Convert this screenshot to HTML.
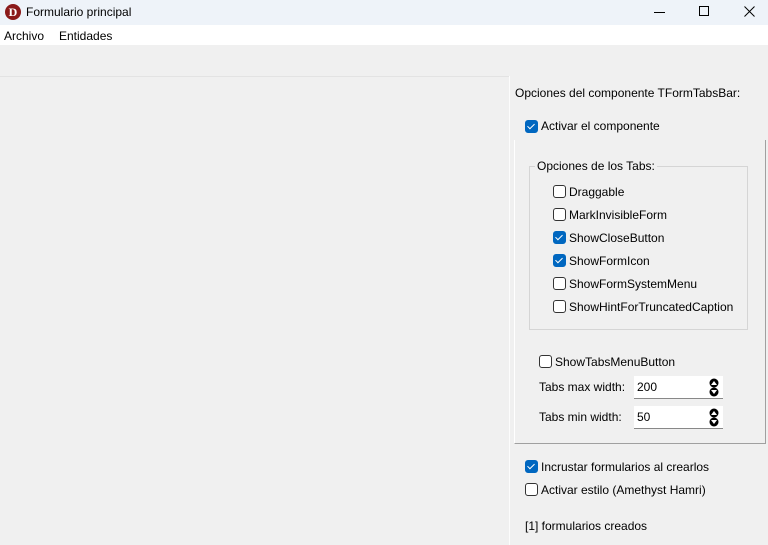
<!DOCTYPE html>
<html><head><style>
*{margin:0;padding:0;box-sizing:border-box}
body{width:768px;height:545px;background:#f0f0f0;font-family:"Liberation Sans",sans-serif;font-size:12px;color:#000;position:relative;overflow:hidden}
.a{position:absolute;white-space:nowrap}
.cb{position:absolute;width:13px;height:13px;border:1px solid #333;border-radius:3px;background:#fff}
.cb.on{background:#0067c0;border-color:#0067c0}
.cb.on::after{content:"";position:absolute;left:3px;top:1px;width:3px;height:6px;border:solid #fff;border-width:0 1.3px 1.3px 0;transform:rotate(45deg)}
.spin{position:absolute;width:89px;height:23px;background:#fff;border-bottom:1px solid #888}
.spin span{position:absolute;left:3px;top:4px}
.spin svg{position:absolute;right:3px;top:2px}
</style></head><body>
<div class="a" style="left:0;top:0;width:768px;height:25px;background:#eef3f9"></div>
<div class="a" style="left:5px;top:4px;width:16px;height:16px;border-radius:50%;background:#8b1a1a;color:#fff;font-weight:bold;font-size:12px;text-align:center;line-height:16px;font-family:'Liberation Serif',serif">D</div>
<div class="a" style="left:26px;top:5px">Formulario principal</div>
<div class="a" style="left:654px;top:12px;width:11px;height:1px;background:#000"></div>
<div class="a" style="left:699px;top:6px;width:10px;height:10px;border:1px solid #000"></div>
<svg class="a" style="left:744px;top:6px" width="11" height="11"><path d="M0.5 0.5L10.5 10.5M10.5 0.5L0.5 10.5" stroke="#000" stroke-width="1"/></svg>
<div class="a" style="left:0;top:25px;width:768px;height:20px;background:#fff"></div>
<div class="a" style="left:4px;top:29px">Archivo</div>
<div class="a" style="left:59px;top:29px">Entidades</div>
<div class="a" style="left:0;top:76px;width:509px;height:1px;background:#e3e3e3"></div>
<div class="a" style="left:509px;top:76px;width:1px;height:469px;background:#fcfcfc"></div>
<div class="a" style="left:515px;top:86px">Opciones del componente TFormTabsBar:</div>
<div class="cb on" style="left:525px;top:120px"></div><div class="a" style="left:541px;top:119px">Activar el componente</div>
<div class="a" style="left:514px;top:140px;width:252px;height:304px;border-left:1px solid #fff;border-right:1px solid #a0a0a0;border-bottom:1px solid #a0a0a0"></div>
<div class="a" style="left:529px;top:166px;width:219px;height:164px;border:1px solid #d5d5d5"></div>
<div class="a" style="left:535px;top:159px;background:#f0f0f0;padding:0 2px">Opciones de los Tabs:</div>
<div class="cb" style="left:553px;top:185px"></div><div class="a" style="left:569px;top:185px">Draggable</div>
<div class="cb" style="left:553px;top:208px"></div><div class="a" style="left:569px;top:208px">MarkInvisibleForm</div>
<div class="cb on" style="left:553px;top:231px"></div><div class="a" style="left:569px;top:231px">ShowCloseButton</div>
<div class="cb on" style="left:553px;top:254px"></div><div class="a" style="left:569px;top:254px">ShowFormIcon</div>
<div class="cb" style="left:553px;top:277px"></div><div class="a" style="left:569px;top:277px">ShowFormSystemMenu</div>
<div class="cb" style="left:553px;top:300px"></div><div class="a" style="left:569px;top:300px">ShowHintForTruncatedCaption</div>
<div class="cb" style="left:539px;top:355px"></div><div class="a" style="left:555px;top:355px">ShowTabsMenuButton</div>
<div class="a" style="left:539px;top:380px">Tabs max width:</div>
<div class="spin" style="left:634px;top:376px"><span>200</span><svg width="12" height="19"><circle cx="6" cy="5" r="4.5"/><circle cx="6" cy="14" r="4.5"/><path d="M3 7L6 3L9 7Z M3 12L9 12L6 16Z" fill="#fff"/></svg></div>
<div class="a" style="left:539px;top:410px">Tabs min width:</div>
<div class="spin" style="left:634px;top:406px"><span>50</span><svg width="12" height="19"><circle cx="6" cy="5" r="4.5"/><circle cx="6" cy="14" r="4.5"/><path d="M3 7L6 3L9 7Z M3 12L9 12L6 16Z" fill="#fff"/></svg></div>
<div class="cb on" style="left:525px;top:460px"></div><div class="a" style="left:541px;top:460px">Incrustar formularios al crearlos</div>
<div class="cb" style="left:525px;top:483px"></div><div class="a" style="left:541px;top:483px">Activar estilo (Amethyst Hamri)</div>
<div class="a" style="left:525px;top:519px">[1] formularios creados</div>
</body></html>
